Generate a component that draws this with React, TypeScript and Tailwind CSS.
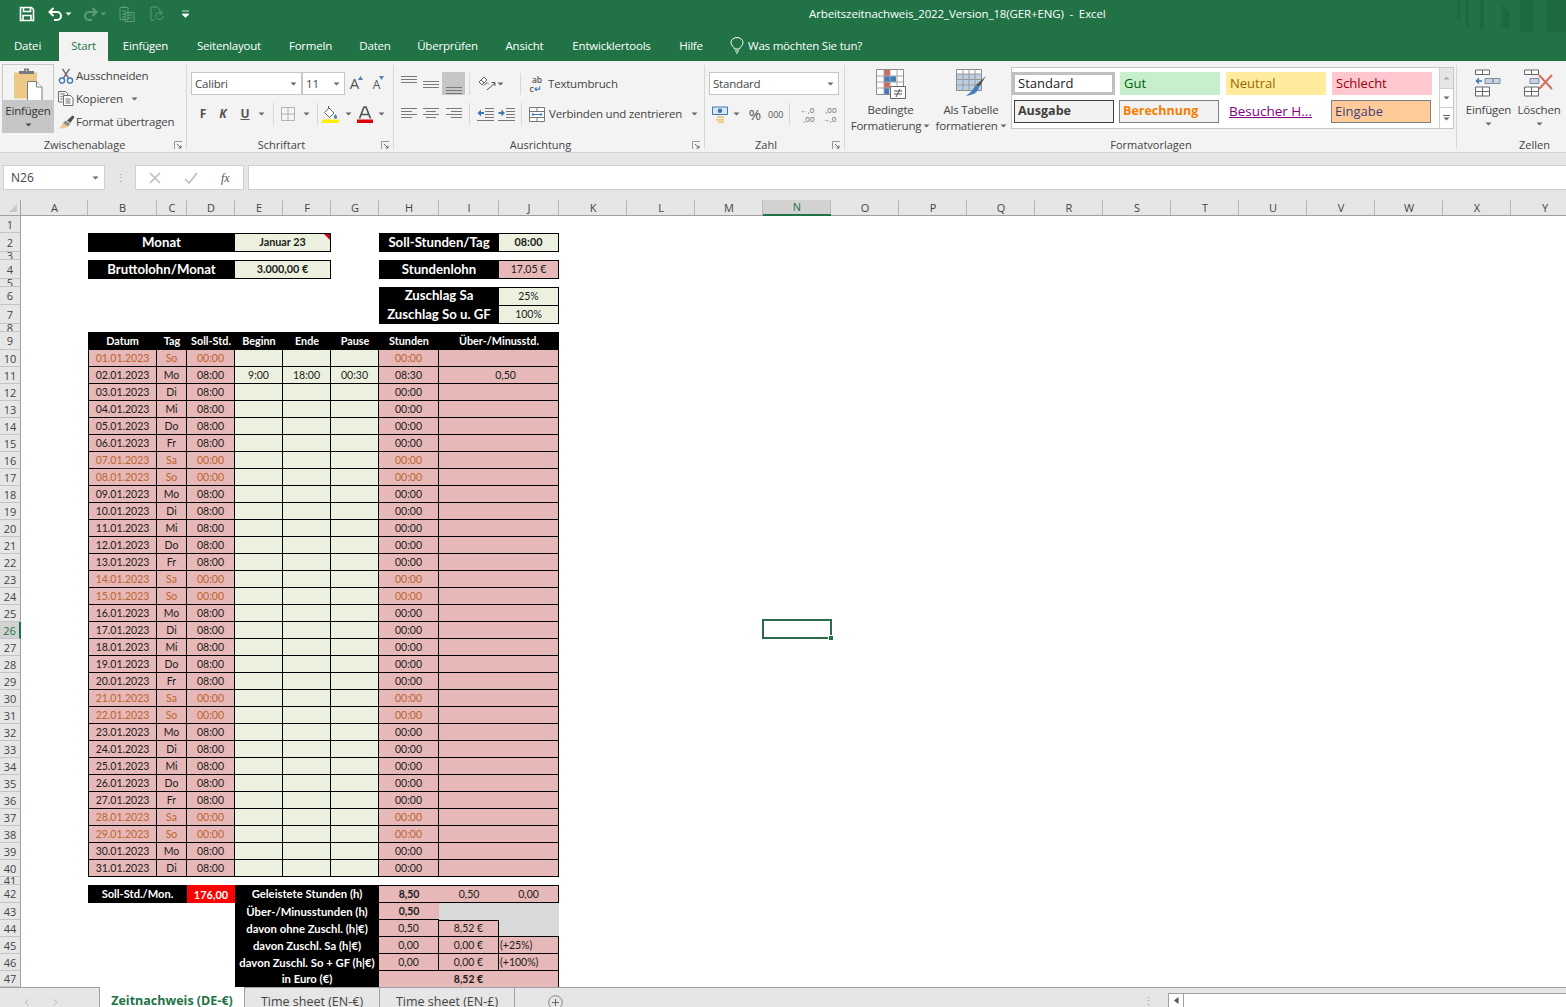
import React from "react";

const UI = "font-['Open_Sans',sans-serif]";
const LETTERS = "ABCDEFGHIJKLMNOPQRSTUVWXY".split("");
const LBL = "text-[11.5px] tracking-[-0.2px]";

const Caret = ({ c = "#666" }: { c?: string }) => (
  <svg width="7" height="4" viewBox="0 0 7 4" className="shrink-0"><path d="M0.5 0.5h6L3.5 3.5z" fill={c} /></svg>
);

const Launcher = () => (
  <svg width="9" height="9" viewBox="0 0 9 9" className="absolute right-[4px] top-[4px]">
    <path d="M0.5 8V0.5H8" fill="none" stroke="#999" />
    <path d="M3 3l4 4M7 4.5V7H4.5" fill="none" stroke="#666" />
  </svg>
);

const Group = ({ w, label, launcher, children }: { w: string; label: string; launcher?: boolean; children: React.ReactNode }) => (
  <div className={`${w} h-full flex flex-col relative shrink-0 after:content-[''] after:absolute after:right-0 after:top-[4px] after:bottom-[3px] after:w-px after:bg-[#d6d6d6]`}>
    <div className="flex-1 min-h-0">{children}</div>
    <div className={`h-[16px] relative text-center text-[11px] leading-[16px] text-[#444] -mb-px ${launcher ? "pr-[18px]" : ""}`}>
      {label}
      {launcher && <Launcher />}
    </div>
  </div>
);

const Sep = ({ className = "" }: { className?: string }) => <div className={`w-px h-[22px] bg-[#d6d6d6] shrink-0 ${className}`} />;

const Select = ({ w, text }: { w: string; text: string }) => (
  <div className={`${w} h-[23px] bg-white border border-[#c6c6c6] flex items-center justify-between pl-[3px] pr-[4px] shrink-0`}>
    <span className={`${LBL} text-[#444] leading-none`}>{text}</span>
    <Caret />
  </div>
);

/* ---------- title-bar glyphs ---------- */
const SaveIcon = () => (
  <svg width="16" height="16" viewBox="0 0 16 16">
    <path d="M1.5 1.5h11l2 2v11h-13z" fill="none" stroke="#fff" strokeWidth="1.6" />
    <path d="M4.5 1.5v4h7v-4M4 14.5v-5h8v5" fill="none" stroke="#fff" strokeWidth="1.6" />
  </svg>
);
const UndoIcon = ({ c, flip }: { c: string; flip?: boolean }) => (
  <svg width="15" height="14" viewBox="0 0 15 14" className={flip ? "-scale-x-100" : ""}>
    <path d="M5.5 1L1.5 5l4 4" fill="none" stroke={c} strokeWidth="2" />
    <path d="M2 5h7a4 4 0 0 1 0 8H6" fill="none" stroke={c} strokeWidth="2" />
  </svg>
);
const FadedDoc = () => (
  <svg width="16" height="16" viewBox="0 0 16 16">
    <path d="M1 1.5h8v12H1zM4 1.5V0.6h2v.9M3 5h4M3 8h4M3 11h4M6 6.5h9v9H6zM8 9h5M8 12h5" fill="none" stroke="#5f9c7c" />
  </svg>
);
const FadedRefresh = () => (
  <svg width="16" height="16" viewBox="0 0 16 16">
    <path d="M2 1h6l3 3v3M2 1v13h4" fill="none" stroke="#5f9c7c" />
    <path d="M14 10a3.5 3.5 0 1 1-1.2-2.6M13 5.5v2.5h-2.5" fill="none" stroke="#5f9c7c" />
  </svg>
);

/* ---------- ribbon glyphs ---------- */
const PasteIcon = () => (
  <svg width="30" height="33" viewBox="0 0 30 33">
    <path d="M1 4.5h23v26H1z" fill="#ecc988" />
    <path d="M6 5V3h5V0.5h5V3h5v3H6z" fill="#77797c" />
    <circle cx="13.5" cy="2.6" r="1" fill="#ecc988" />
    <path d="M14.5 13.5h9l5.5 5.5v13.5h-14.5z" fill="#fff" stroke="#7d7d7d" />
    <path d="M23.5 13.5v5.5h5.5" fill="#fff" stroke="#7d7d7d" />
  </svg>
);
const ScissorsIcon = () => (
  <svg width="16" height="16" viewBox="0 0 16 16">
    <path d="M11.5 0.8L5.5 10M4.5 0.8L10.5 10" fill="none" stroke="#6c6c6c" strokeWidth="1.4" />
    <circle cx="4" cy="12.6" r="2.6" fill="none" stroke="#3f7cb8" strokeWidth="1.4" />
    <circle cx="12" cy="12.6" r="2.6" fill="none" stroke="#3f7cb8" strokeWidth="1.4" />
  </svg>
);
const CopyIcon = () => (
  <svg width="16" height="15" viewBox="0 0 16 15">
    <path d="M0.5 0.5h7l2 2v1.5M0.5 0.5v10.5h4M2.5 3h4M2.5 5.5h2M2.5 8h2" fill="none" stroke="#6c6c6c" />
    <path d="M5.5 4.5h7l2.5 2.5v7.5h-9.5zM7.5 8h5M7.5 10h5M7.5 12h5" fill="#fff" stroke="#6c6c6c" />
  </svg>
);
const BrushIcon = () => (
  <svg width="17" height="14" viewBox="0 0 17 14">
    <path d="M0 13C3 13 4 10 5 8l5 3.5c-3 2-7 2.5-10 1.5z" fill="#eec98c" />
    <path d="M5 8l2.6-2.6 4.6 3.6-2.2 2.5z" fill="#8a8a8a" />
    <path d="M9 5.6L14.5 0.5l2 1.5-4.2 6z" fill="#4d4d4d" />
  </svg>
);
const GrowA = ({ up }: { up: boolean }) => (
  <div className="flex items-start w-[15px] h-[17px] justify-center gap-0">
    <span className={`${up ? "text-[15px]" : "text-[12px] mt-[2px]"} leading-[16px] text-[#555]`}>A</span>
    <svg width="5" height="4" viewBox="0 0 5 4" className="-ml-px mt-px"><path d={up ? "M0 4h5L2.5 0z" : "M0 0h5L2.5 4z"} fill="#5080b8" /></svg>
  </div>
);
const BordersIcon = () => (
  <svg width="14" height="14" viewBox="0 0 14 14">
    <path d="M0.5 0.5h13v13h-13zM0.5 7h13M7 0.5v13" fill="none" stroke="#777" strokeDasharray="1 1" />
  </svg>
);
const FillIcon = () => (
  <svg width="17" height="18" viewBox="0 0 17 18">
    <path d="M6.5 1v3M2.5 7.5L7 3l5 5-4.5 4.5z" fill="#fff" stroke="#666" />
    <path d="M13.5 9c1 1.6 1.6 2.4 1.6 3.2a1.6 1.6 0 0 1-3.2 0c0-.8.6-1.6 1.6-3.2z" fill="#5080b8" />
    <path d="M0 14.5h17V18H0z" fill="#ffee00" />
  </svg>
);
const FontColorIcon = () => (
  <svg width="16" height="17" viewBox="0 0 16 17">
    <path d="M2.5 12.5L7 1h2l4.5 11.5M4.5 8.5h7" fill="none" stroke="#555" strokeWidth="1.7" />
    <path d="M0 13.5h16V17H0z" fill="#e00000" />
  </svg>
);
const Lines = ({ rows }: { rows: [number, number, number][] }) => (
  <svg width="16" height="14" viewBox="0 0 16 14" className="shrink-0">
    {rows.map((r, i) => (<path key={i} d={`M${r[0]} ${r[2]}.5H${r[1]}`} stroke="#7a7a7a" />))}
  </svg>
);
const Orient = () => (
  <svg width="18" height="15" viewBox="0 0 18 15" className="shrink-0">
    <path d="M1 6l5-5 3 3-5 5zM6 9.5l3-3 2 2M3 4l3 3" fill="none" stroke="#666" />
    <path d="M9 14L17 7M13.5 6.5H17V10" fill="none" stroke="#555" />
  </svg>
);
const Indent = ({ out }: { out: boolean }) => (
  <svg width="17" height="13" viewBox="0 0 17 13" className="shrink-0">
    <path d="M8 0.5h9M8 3.5h9M8 6.5h9M8 9.5h9M0 12.5h17" stroke="#777" />
    <path d={out ? "M0.5 5l3.5-3.5v2.5h3v2h-3v2.5z" : "M7 5L3.5 1.5v2.5h-3v2h3v2.5z"} fill="#3d7ab5" />
  </svg>
);
const WrapIcon = () => (
  <div className="w-[14px] h-[18px] flex flex-col items-center text-[8.5px] font-semibold text-[#555] shrink-0 leading-[9px]">
    <span>ab</span>
    <span className="-ml-[3px]">c<span className="text-[#3d7ab5]">↵</span></span>
  </div>
);
const MergeIcon = () => (
  <svg width="16" height="15" viewBox="0 0 16 15" className="shrink-0">
    <path d="M0.5 0.5h15v14h-15zM0.5 4.5h15M0.5 10.5h15M8 0.5v4M8 10.5v4" fill="#fff" stroke="#777" />
    <path d="M3 7.5h10M4.5 6L3 7.5 4.5 9M11.5 6L13 7.5 11.5 9" fill="none" stroke="#3d7ab5" />
  </svg>
);
const CurrencyIcon = () => (
  <svg width="17" height="17" viewBox="0 0 17 17">
    <path d="M0.5 1h15v7.5h-15z" fill="#dce6f2" stroke="#3d7ab5" />
    <circle cx="8" cy="4.8" r="2.3" fill="#3d7ab5" />
    <path d="M5 10h7v2H5zM4 13h8v1.8H4zM6 15.2h6V17H6z" fill="#edca8c" />
  </svg>
);
const DecIcon = ({ inc }: { inc: boolean }) => (
  <div className="w-[17px] h-[18px] flex flex-col text-[8px] leading-[9px] text-[#666] items-end">
    <span className="flex items-center"><span className="text-[#3d7ab5] text-[8px] leading-[9px]">{inc ? "←" : ""}</span>{inc ? ",0" : ",00"}</span>
    <span className="flex items-center"><span className="text-[#3d7ab5] text-[8px] leading-[9px]">{inc ? "" : "→"}</span>{inc ? ",00" : ",0"}</span>
  </div>
);
const CondIcon = () => (
  <svg width="30" height="30" viewBox="0 0 30 30">
    <path d="M0.5 0.5h27v25h-27z" fill="#fff" stroke="#8c8c8c" />
    <path d="M8 1h6v6H8z" fill="#cf6a5a" /><path d="M8 7h12v6H8z" fill="#3f7cb8" /><path d="M8 13h6v6H8z" fill="#cf6a5a" /><path d="M8 19h5v6H8z" fill="#3f7cb8" />
    <path d="M0.5 7h27M0.5 13h27M0.5 19h27M8 0.5v25M14 0.5v25M21 0.5v25" fill="none" stroke="#a6a6a6" />
    <path d="M14.5 17.5h15v12h-15z" fill="#fff" stroke="#666" />
    <path d="M18 22h8M18 25h8M24 20l-4 8" fill="none" stroke="#555" />
  </svg>
);
const TableIcon = () => (
  <svg width="31" height="30" viewBox="0 0 31 30">
    <path d="M0.5 0.5h25v21h-25z" fill="#fff" stroke="#8c8c8c" />
    <path d="M1 5h24v16H1z" fill="#bccee4" />
    <path d="M0.5 5h25M0.5 10.500h25M0.5 16h25M7 0.5v21M13 0.5v21M19 0.5v21" fill="none" stroke="#9a9a9a" />
    <path d="M30 7L23 18l-3-2z" fill="#555" />
    <path d="M20 16l3 2.500c-1 3-3 6-7 7-2 .5-4 1.500-6 1 4-2 7-6 10-10.500z" fill="#3f7cb8" />
  </svg>
);
const InsertCells = () => (
  <svg width="28" height="28" viewBox="0 0 28 28">
    <path d="M0.5 1h7v4.500h-7zM7.500 1h7v4.500h-7zM0.5 18h7v4.500h-7zM7.500 18h7v4.500h-7zM0.5 22.500h7V27h-7zM7.500 22.500h7V27h-7z" fill="#fff" stroke="#666" />
    <path d="M10 9.500h8v5h-8zM18 9.500h7v5h-7z" fill="#c9d3df" stroke="#7b8ea4" />
    <path d="M1 12h6M4 9.500L1.500 12 4 14.500" fill="none" stroke="#3d7ab5" strokeWidth="1.6" />
  </svg>
);
const DeleteCells = () => (
  <svg width="30" height="28" viewBox="0 0 30 28">
    <path d="M0.5 1h7v4.500h-7zM7.500 1h7v4.500h-7zM0.5 18h7v4.500h-7zM7.500 18h7v4.500h-7zM0.5 22.500h7V27h-7zM7.500 22.500h7V27h-7z" fill="#fff" stroke="#666" />
    <path d="M6 9.500h9v5H6z" fill="#c9d3df" stroke="#7b8ea4" />
    <path d="M15 6l13 14M28 6L15 20" fill="none" stroke="#d0705a" strokeWidth="2" />
  </svg>
);

const SmallBtn = ({ icon, text, caret }: { icon: React.ReactNode; text: string; caret?: boolean }) => (
  <div className="h-[23px] flex items-center shrink-0">
    <div className="w-[18px] flex justify-center shrink-0">{icon}</div>
    <span className={`ml-[1px] ${LBL} text-[#444] whitespace-nowrap leading-none`}>{text}</span>
    {caret && <span className="ml-[8px]"><Caret /></span>}
  </div>
);

const StyleChip = ({ w, cls, children }: { w: string; cls: string; children: React.ReactNode }) => (
  <div className={`${w} h-[23px] flex items-center pl-[4px] leading-none shrink-0 ${cls}`}>{children}</div>
);

const Tab = ({ w, text, active }: { w: string; text: string; active?: boolean }) => (
  <div className={`${w} h-full flex items-center justify-center ${LBL} pb-[2px] leading-none shrink-0 ${active ? "bg-[#f3f3f3] text-[#217346]" : "text-white"}`}>{text}</div>
);

/* ---------- spreadsheet ---------- */
const Cell = ({ c, r, cs = 1, rs = 1, className = "", children }: { c: number; r: number; cs?: number; rs?: number; className?: string; children?: React.ReactNode }) => (
  <div
    className={`flex items-center justify-center overflow-hidden whitespace-nowrap leading-none ${className}`}
    style={{ gridColumn: `${c + 1} / span ${cs}`, gridRow: `${r + 1} / span ${rs}` }}
  >
    {children}
  </div>
);

const PINK = "bg-[#e6b8b7]";
const GREEN = "bg-[#ebf1de]";
const LINE = "border-black";
const BIG = "bg-black text-white font-bold text-[13.2px]";
const days = ["So", "Mo", "Di", "Mi", "Do", "Fr", "Sa"];

const Sheet = () => {
  const rowsArr = Array.from({ length: 47 }, (_, i) => i + 1);
  return (
    <div className="h-[787px] shrink-0 grid grid-cols-[21px_67px_69px_30px_48px_48px_48px_48px_60px_60px_60px_repeat(15,68px)] grid-rows-[16px_17px_19px_8px_19px_8px_18px_19px_8px_18px_repeat(31,17px)_8px_18px_repeat(4,17px)_16px] bg-white overflow-hidden text-[10.5px] font-['Lato',sans-serif] text-[#1c1c1c]">
      {/* corner */}
      <div className="bg-[#e6e6e6] border-b border-r border-[#a0a0a0] relative [grid-column:1] [grid-row:1]">
        <svg width="10" height="10" viewBox="0 0 10 10" className="absolute right-[2px] bottom-[2px]"><path d="M9 1v8H1z" fill="#c8c8c8" /></svg>
      </div>
      {/* column heads */}
      {LETTERS.map((l, i) => (
        <Cell key={l} c={i + 1} r={0} className={`text-[11px] pb-[1px] font-['Open_Sans',sans-serif] border-b ${l === "N" ? "bg-[#d2d2d2] text-[#217346] border-b-2 border-b-[#217346]" : "bg-[#e6e6e6] text-[#444] border-[#a0a0a0]"} relative after:content-[''] after:absolute after:right-0 after:top-0 after:bottom-0 after:w-px after:bg-[#b8b8b8]`}>{l}</Cell>
      ))}
      {/* row heads */}
      {rowsArr.map((n) => (
        <Cell key={n} c={0} r={n} className={`text-[11px] font-['Open_Sans',sans-serif] border-b border-[#c4c4c4] border-r ${n === 26 ? "bg-[#d2d2d2] text-[#217346] border-r-2 border-r-[#217346]" : "bg-[#e6e6e6] text-[#444] border-r-[#a0a0a0]"}`}>{n}</Cell>
      ))}

      {/* top blocks */}
      <Cell c={2} r={2} cs={3} className={BIG}>Monat</Cell>
      <Cell c={5} r={2} cs={2} className={`${GREEN} border ${LINE} border-l-0 font-bold text-[10.8px] relative`}>
        Januar 23
        <svg width="6" height="6" viewBox="0 0 6 6" className="absolute right-0 top-0"><path d="M0 0h6v6z" fill="#c00020" /></svg>
      </Cell>
      <Cell c={2} r={4} cs={3} className={BIG}>Bruttolohn/Monat</Cell>
      <Cell c={5} r={4} cs={2} className={`${GREEN} border ${LINE} border-l-0 font-bold text-[10.8px]`}>3.000,00 €</Cell>
      <Cell c={8} r={2} cs={2} className={BIG}>Soll-Stunden/Tag</Cell>
      <Cell c={10} r={2} className={`${GREEN} border ${LINE} border-l-0 font-bold text-[10.8px]`}>08:00</Cell>
      <Cell c={8} r={4} cs={2} className={BIG}>Stundenlohn</Cell>
      <Cell c={10} r={4} className={`${PINK} border ${LINE} border-l-0`}>17,05 €</Cell>
      <Cell c={8} r={6} cs={2} className={BIG}>Zuschlag Sa</Cell>
      <Cell c={10} r={6} className={`${GREEN} border ${LINE} border-l-0 border-b-0`}>25%</Cell>
      <Cell c={8} r={7} cs={2} className={BIG}>Zuschlag So u. GF</Cell>
      <Cell c={10} r={7} className={`${GREEN} border ${LINE} border-l-0`}>100%</Cell>

      {/* table head */}
      {([[2, 1, "Datum"], [3, 1, "Tag"], [4, 1, "Soll-Std."], [5, 1, "Beginn"], [6, 1, "Ende"], [7, 1, "Pause"], [8, 1, "Stunden"], [9, 2, "Über-/Minusstd."]] as [number, number, string][]).map(([c, cs, t]) => (
        <Cell key={t} c={c} r={9} cs={cs} className="bg-black text-white font-bold text-[10.8px]">{t}</Cell>
      ))}
      {/* table body */}
      {Array.from({ length: 31 }, (_, i) => {
        const d = i + 1;
        const r = 10 + i;
        const tag = days[i % 7];
        const we = tag === "Sa" || tag === "So";
        const txt = we ? "text-[#bd6430]" : "";
        const cell = `border-b border-r ${LINE}`;
        const date = `${String(d).padStart(2, "0")}.01.2023`;
        return (
          <React.Fragment key={d}>
            <Cell c={2} r={r} className={`${PINK} ${cell} border-l ${txt}`}>{date}</Cell>
            <Cell c={3} r={r} className={`${PINK} ${cell} ${txt}`}>{tag}</Cell>
            <Cell c={4} r={r} className={`${PINK} ${cell} ${txt}`}>{we ? "00:00" : "08:00"}</Cell>
            <Cell c={5} r={r} className={`${GREEN} ${cell}`}>{d === 2 ? "9:00" : ""}</Cell>
            <Cell c={6} r={r} className={`${GREEN} ${cell}`}>{d === 2 ? "18:00" : ""}</Cell>
            <Cell c={7} r={r} className={`${GREEN} ${cell}`}>{d === 2 ? "00:30" : ""}</Cell>
            <Cell c={8} r={r} className={`${PINK} ${cell} ${txt}`}>{d === 2 ? "08:30" : "00:00"}</Cell>
            <Cell c={9} r={r} cs={2} className={`${PINK} ${cell} pl-[14px]`}>{d === 2 ? "0,50" : ""}</Cell>
          </React.Fragment>
        );
      })}

      {/* summary */}
      <Cell c={2} r={42} cs={2} className="bg-black text-white font-bold text-[11.1px]">Soll-Std./Mon.</Cell>
      <Cell c={4} r={42} className="bg-[#ff0000] text-white font-bold text-[11px]">176,00</Cell>
      {["Geleistete Stunden (h)", "Über-/Minusstunden (h)", "davon ohne Zuschl. (h|€)", "davon Zuschl. Sa (h|€)", "davon Zuschl. So + GF (h|€)", "in Euro (€)"].map((t, i) => (
        <Cell key={t} c={5} r={42 + i} cs={3} className="bg-black text-white font-bold text-[11.3px]">{t}</Cell>
      ))}
      <Cell c={8} r={42} className={`${PINK} font-bold border-b ${LINE} border-t`}>8,50</Cell>
      <Cell c={9} r={42} className={`${PINK} border-b ${LINE} border-t`}>0,50</Cell>
      <Cell c={10} r={42} className={`${PINK} border-b border-r ${LINE} border-t`}>0,00</Cell>
      <Cell c={8} r={43} className={`${PINK} font-bold border-b ${LINE}`}>0,50</Cell>
      <Cell c={9} r={43} cs={2} className="bg-[#d9d9d9]" />
      <Cell c={8} r={44} className={`${PINK} border-b border-r ${LINE}`}>0,50</Cell>
      <Cell c={9} r={44} className={`${PINK} border-t border-b border-r ${LINE}`}>8,52 €</Cell>
      <Cell c={10} r={44} className={`bg-[#d9d9d9] border-b ${LINE}`} />
      <Cell c={8} r={45} className={`${PINK} border-b border-r ${LINE}`}>0,00</Cell>
      <Cell c={9} r={45} className={`${PINK} border-b border-r ${LINE}`}>0,00 €</Cell>
      <Cell c={10} r={45} className={`${PINK} border-b border-r ${LINE} !justify-start pl-[1px]`}>(+25%)</Cell>
      <Cell c={8} r={46} className={`${PINK} border-b border-r ${LINE}`}>0,00</Cell>
      <Cell c={9} r={46} className={`${PINK} border-b border-r ${LINE}`}>0,00 €</Cell>
      <Cell c={10} r={46} className={`${PINK} border-b border-r ${LINE} !justify-start pl-[1px]`}>(+100%)</Cell>
      <Cell c={8} r={47} cs={3} className={`${PINK} font-bold border-r ${LINE}`}>8,52 €</Cell>

      {/* selection */}
      <div className="relative [grid-column:15] [grid-row:27]">
        <div className="absolute -left-px -top-[3px] w-[70px] h-[20px] border-2 border-[#2b6a4b]" />
        <div className="absolute left-[65px] top-[13px] w-[6px] h-[6px] bg-[#217346] border border-white" />
      </div>
    </div>
  );
};

export default function App() {
  return (
    <div className={`h-[1007px] w-full overflow-hidden flex flex-col bg-[#e6e6e6] ${UI}`}>
      {/* title bar */}
      <div className="h-[32px] shrink-0 bg-[#217346] flex items-center pb-[5px] relative overflow-hidden">
        <div className="w-[809px] flex items-center pl-[19px] shrink-0">
          <SaveIcon />
          <span className="ml-[13px]"><UndoIcon c="#fff" /></span>
          <span className="ml-[2px]"><Caret c="#fff" /></span>
          <span className="ml-[11px]"><UndoIcon c="#5f9c7c" flip /></span>
          <span className="ml-[2px]"><Caret c="#5f9c7c" /></span>
          <span className="ml-[12px]"><FadedDoc /></span>
          <span className="ml-[14px]"><FadedRefresh /></span>
          <svg width="7" height="8" viewBox="0 0 7 8" className="ml-[17px]"><path d="M0 1h7M0 4h7L3.5 7.500z" fill="#fff" stroke="#fff" strokeWidth=".8" /></svg>
        </div>
        <span className="text-[11.5px] tracking-[-0.12px] text-white whitespace-nowrap leading-none">Arbeitszeitnachweis_2022_Version_18(GER+ENG)&nbsp; -&nbsp; Excel</span>
        <svg width="110" height="36" viewBox="0 0 110 36" className="absolute right-0 top-0">
          <path d="M1 0h3v20H1zM10 0h3v28H10zM24 0h4v30h-4zM42 0l12 12v18l-8-4V8zM64 0h14v36H64zM90 0h20v36H90z" fill="#1d6a3f" />
        </svg>
      </div>

      {/* tabs */}
      <div className="h-[29px] shrink-0 bg-[#217346] flex items-stretch">
        <Tab w="w-[55px]" text="Datei" />
        <div className="w-[4px] shrink-0" />
        <Tab w="w-[49px]" text="Start" active />
        <Tab w="w-[75px]" text="Einfügen" />
        <Tab w="w-[92px]" text="Seitenlayout" />
        <Tab w="w-[71px]" text="Formeln" />
        <Tab w="w-[58px]" text="Daten" />
        <Tab w="w-[87px]" text="Überprüfen" />
        <Tab w="w-[67px]" text="Ansicht" />
        <Tab w="w-[107px]" text="Entwicklertools" />
        <Tab w="w-[52px]" text="Hilfe" />
        <div className={`flex items-center pl-[13px] pb-[2px] text-white ${LBL} leading-none`}>
          <svg width="14" height="17" viewBox="0 0 14 17" className="mr-[4px]"><path d="M4.500 12c0-2-3.500-3-3.500-6.500a6 5 0 0 1 12 0C13 9 9.500 10 9.500 12zM5 14h4M6 16h2" fill="none" stroke="#fff" /></svg>
          Was möchten Sie tun?
        </div>
      </div>

      {/* ribbon */}
      <div className="h-[92px] shrink-0 bg-[#f3f3f3] flex border-b border-[#d2d2d2]">
        <Group w="w-[187px]" label="Zwischenablage" launcher>
          <div className="flex pl-[2px] pt-[3px]">
            <div className="w-[52px] h-[69px] flex flex-col border border-[#c6c6c6] shrink-0">
              <div className="h-[35px] flex items-start justify-center pt-[3px]"><PasteIcon /></div>
              <div className={`flex-1 bg-[#c6c6c6] flex flex-col items-center pt-[3px] ${LBL} text-[#333] leading-[15px]`}>
                Einfügen
                <span className="mt-[5px]"><Caret c="#444" /></span>
              </div>
            </div>
            <div className="ml-[3px] flex flex-col">
              <SmallBtn icon={<ScissorsIcon />} text="Ausschneiden" />
              <SmallBtn icon={<CopyIcon />} text="Kopieren" caret />
              <SmallBtn icon={<BrushIcon />} text="Format übertragen" />
            </div>
          </div>
        </Group>

        <Group w="w-[207px]" label="Schriftart" launcher>
          <div className="pl-[4px] pt-[11px] flex flex-col">
            <div className="flex items-center">
              <Select w="w-[111px]" text="Calibri" />
              <Select w="w-[43px]" text="11" />
              <span className="ml-[4px]"><GrowA up /></span>
              <span className="ml-[7px]"><GrowA up={false} /></span>
            </div>
            <div className="flex items-center mt-[8px] h-[22px] text-[#555] text-[12px] font-bold">
              <span className="ml-[7px] w-[10px] text-center">F</span>
              <span className="ml-[10px] w-[10px] text-center italic">K</span>
              <span className="ml-[12px] w-[10px] text-center underline">U</span>
              <span className="ml-[8px]"><Caret /></span>
              <Sep className="ml-[8px]" />
              <span className="ml-[7px]"><BordersIcon /></span>
              <span className="ml-[8px]"><Caret /></span>
              <Sep className="ml-[7px]" />
              <span className="ml-[4px]"><FillIcon /></span>
              <span className="ml-[6px]"><Caret /></span>
              <span className="ml-[5px]"><FontColorIcon /></span>
              <span className="ml-[5px]"><Caret /></span>
            </div>
          </div>
        </Group>

        <Group w="w-[311px]" label="Ausrichtung" launcher>
          <div className="pl-[3px] pt-[11px] flex flex-col">
            <div className="flex items-center h-[23px]">
              <div className="w-[23px] flex justify-center pb-[4px] shrink-0"><Lines rows={[[0, 16, 1], [0, 16, 4], [0, 16, 7]]} /></div>
              <div className="w-[22px] flex justify-center shrink-0"><Lines rows={[[0, 16, 4], [0, 16, 7], [0, 16, 10]]} /></div>
              <div className="w-[23px] h-[23px] bg-[#c6c6c6] flex items-end justify-center pb-[1px] shrink-0"><Lines rows={[[0, 16, 7], [0, 16, 10], [0, 16, 13]]} /></div>
              <Sep className="ml-[4px]" />
              <span className="ml-[8px]"><Orient /></span>
              <span className="ml-[1px]"><Caret /></span>
              <Sep className="ml-[16px]" />
              <span className="ml-[9px]"><WrapIcon /></span>
              <span className={`ml-[4px] ${LBL} text-[#444] leading-none whitespace-nowrap`}>Textumbruch</span>
            </div>
            <div className="flex items-center h-[22px] mt-[8px]">
              <div className="w-[23px] flex justify-center shrink-0"><Lines rows={[[0, 16, 1], [0, 11, 4], [0, 16, 7], [0, 11, 10]]} /></div>
              <div className="w-[22px] flex justify-center shrink-0"><Lines rows={[[0, 16, 1], [3, 13, 4], [0, 16, 7], [3, 13, 10]]} /></div>
              <div className="w-[23px] flex justify-center shrink-0"><Lines rows={[[0, 16, 1], [5, 16, 4], [0, 16, 7], [5, 16, 10]]} /></div>
              <Sep className="ml-[4px]" />
              <span className="ml-[7px]"><Indent out /></span>
              <span className="ml-[4px]"><Indent out={false} /></span>
              <Sep className="ml-[6px]" />
              <span className="ml-[7px]"><MergeIcon /></span>
              <span className={`ml-[4px] ${LBL} text-[#444] leading-none whitespace-nowrap`}>Verbinden und zentrieren</span>
              <span className="ml-[9px]"><Caret /></span>
            </div>
          </div>
        </Group>

        <Group w="w-[140px]" label="Zahl" launcher>
          <div className="pl-[4px] pt-[11px] flex flex-col">
            <Select w="w-[130px]" text="Standard" />
            <div className="flex items-center h-[22px] mt-[8px] text-[#555]">
              <span className="ml-[3px]"><CurrencyIcon /></span>
              <span className="ml-[4px]"><Caret /></span>
              <span className="ml-[7px] text-[15px] leading-none w-[16px] text-center">%</span>
              <span className="ml-[5px] text-[9px] leading-none">000</span>
              <Sep className="ml-[6px]" />
              <span className="ml-[7px]"><DecIcon inc /></span>
              <span className="ml-[5px]"><DecIcon inc={false} /></span>
            </div>
          </div>
        </Group>

        <Group w="w-[612px]" label="Formatvorlagen">
          <div className="flex pl-[3px]">
            <div className={`w-[85px] flex flex-col items-center pt-[8px] ${LBL} text-[#444] leading-[16px] shrink-0`}>
              <CondIcon />
              <span className="mt-[3px]">Bedingte</span>
              <span className="flex items-center gap-[2px] whitespace-nowrap">Formatierung <Caret /></span>
            </div>
            <div className={`w-[76px] flex flex-col items-center pt-[8px] ${LBL} text-[#444] leading-[16px] shrink-0`}>
              <TableIcon />
              <span className="mt-[3px] whitespace-nowrap">Als Tabelle</span>
              <span className="flex items-center gap-[2px] whitespace-nowrap">formatieren <Caret /></span>
            </div>
            <div className="ml-[2px] mt-[6px] w-[443px] h-[62px] bg-white border border-[#c6c6c6] flex shrink-0">
              <div className="flex-1 flex flex-col pl-0 pt-[4px]">
                <div className="flex gap-[6px]">
                  <StyleChip w="w-[103px]" cls="bg-white border-[3px] border-[#c0c0c0] text-[#222] text-[13px] !pl-[3px] -mr-[3px]">Standard</StyleChip>
                  <StyleChip w="w-[100px]" cls="bg-[#c6efce] text-[#006100] text-[13px] ml-[2px]">Gut</StyleChip>
                  <StyleChip w="w-[100px]" cls="bg-[#ffeb9c] text-[#9c6500] text-[13px]">Neutral</StyleChip>
                  <StyleChip w="w-[100px]" cls="bg-[#ffc7ce] text-[#9c0006] text-[13px]">Schlecht</StyleChip>
                </div>
                <div className="flex gap-[6px] mt-[5px]">
                  <StyleChip w="w-[100px]" cls="bg-[#f2f2f2] border border-[#3f3f3f] text-[#3f3f3f] font-bold text-[12.5px] !pl-[3px] ml-[2px] -mr-[2px]">Ausgabe</StyleChip>
                  <StyleChip w="w-[100px]" cls="bg-[#f2f2f2] border border-[#7f7f7f] text-[#fa7d00] font-bold text-[12.5px] !pl-[3px] ml-[1px]">Berechnung</StyleChip>
                  <StyleChip w="w-[100px]" cls="text-[#800080] underline text-[13.5px]">Besucher H...</StyleChip>
                  <StyleChip w="w-[100px]" cls="bg-[#ffcc99] border border-[#7f7f7f] text-[#3f3f76] text-[13px] !pl-[3px]">Eingabe</StyleChip>
                </div>
              </div>
              <div className="w-[14px] flex flex-col border-l border-[#d0d0d0] shrink-0">
                <div className="h-[21px] bg-[#e6e6e6] flex items-center justify-center border-b border-[#d0d0d0]"><svg width="7" height="4" viewBox="0 0 7 4"><path d="M0.5 3.500h6L3.500 .5z" fill="#aaa" /></svg></div>
                <div className="h-[19px] flex items-center justify-center border-b border-[#d0d0d0]"><Caret /></div>
                <div className="flex-1 flex flex-col items-center justify-center gap-[1px]"><div className="w-[7px] h-px bg-[#666]" /><Caret /></div>
              </div>
            </div>
          </div>
        </Group>

        <div className="flex-1 h-full flex flex-col">
          <div className="flex-1 flex pl-[7px]">
            <div className={`w-[49px] flex flex-col items-center pt-[8px] ${LBL} text-[#444] leading-[16px] shrink-0`}>
              <InsertCells />
              <span className="mt-[5px]">Einfügen</span>
              <span className="mt-[4px]"><Caret /></span>
            </div>
            <div className={`w-[46px] ml-[3px] flex flex-col items-center pt-[8px] ${LBL} text-[#444] leading-[16px] shrink-0`}>
              <DeleteCells />
              <span className="mt-[5px]">Löschen</span>
              <span className="mt-[4px]"><Caret /></span>
            </div>
          </div>
          <div className="h-[16px] text-[11px] leading-[16px] text-[#444] text-right pr-[16px] -mb-px">Zellen</div>
        </div>
      </div>

      {/* gap */}
      <div className="h-[12px] shrink-0" />

      {/* formula bar */}
      <div className="h-[25px] shrink-0 flex items-stretch">
        <div className="ml-[3px] w-[102px] bg-white border border-[#d0d0d0] flex items-center justify-between pl-[7px] pr-[5px] text-[12px] text-[#444] leading-none shrink-0">
          N26<Caret />
        </div>
        <div className="w-[30px] flex items-center justify-center text-[#999] text-[11px] shrink-0 leading-[5px] tracking-tight">⋮</div>
        <div className="w-[109px] bg-white border border-[#d0d0d0] flex items-center shrink-0 text-[#9a9a9a]">
          <svg width="12" height="12" viewBox="0 0 12 12" className="ml-[13px]"><path d="M1 1l10 10M11 1L1 11" stroke="#bcbcbc" strokeWidth="1.6" /></svg>
          <svg width="14" height="12" viewBox="0 0 14 12" className="ml-[23px]"><path d="M1 7l4 4 8-10" fill="none" stroke="#bcbcbc" strokeWidth="1.6" /></svg>
          <span className="ml-[23px] text-[12px] italic font-['Liberation_Serif',serif] text-[#555] leading-none">fx</span>
        </div>
        <div className="ml-[4px] flex-1 bg-white border-l border-y border-[#d0d0d0]" />
      </div>

      {/* gap */}
      <div className="h-[10px] shrink-0" />

      <Sheet />

      {/* sheet tabs */}
      <div className="h-[20px] shrink-0 flex items-stretch bg-[#e6e6e6] border-t border-[#a0a0a0]">
        <div className="w-[99px] flex items-center pl-[24px] pt-[9px] gap-[24px] shrink-0 text-[#bdbdbd]">
          <svg width="5" height="7" viewBox="0 0 5 7"><path d="M4.500 .5L1 3.500l3.500 3" fill="none" stroke="#b8b8b8" /></svg>
          <svg width="5" height="7" viewBox="0 0 5 7"><path d="M.5 .5L4 3.500.5 6.500" fill="none" stroke="#b8b8b8" /></svg>
        </div>
        <div className="w-[146px] -mt-px pt-[9px] bg-white flex items-center justify-center text-[12.5px] font-bold text-[#217346] leading-none shrink-0 border-l border-r border-[#a0a0a0] whitespace-nowrap">Zeitnachweis (DE-€)</div>
        <div className="w-[135px] pt-[9px] flex items-center justify-center text-[12.5px] text-[#444] leading-none shrink-0 border-r border-[#a0a0a0] whitespace-nowrap">Time sheet (EN-€)</div>
        <div className="w-[135px] pt-[9px] flex items-center justify-center text-[12.5px] text-[#444] leading-none shrink-0 border-r border-[#a0a0a0] whitespace-nowrap">Time sheet (EN-£)</div>
        <div className="ml-[33px] flex items-center pt-[9px] shrink-0">
          <svg width="15" height="15" viewBox="0 0 15 15"><circle cx="7.500" cy="7.500" r="6.800" fill="none" stroke="#888" /><path d="M7.500 4v7M4 7.500h7" stroke="#666" /></svg>
        </div>
        <div className="flex-1 flex items-center justify-end">
          <div className="text-[#999] text-[11px] leading-none mr-[14px] pt-[6px]">⋮</div>
          <div className="w-[398px] h-[14px] mt-[5px] bg-white border-t border-l border-[#a0a0a0] flex items-center shrink-0">
            <div className="w-[15px] h-full flex items-center justify-center border-r border-[#a0a0a0]">
              <svg width="5" height="7" viewBox="0 0 5 7"><path d="M4.500 0v7L0 3.500z" fill="#555" /></svg>
            </div>
          </div>
        </div>
      </div>
    </div>
  );
}
